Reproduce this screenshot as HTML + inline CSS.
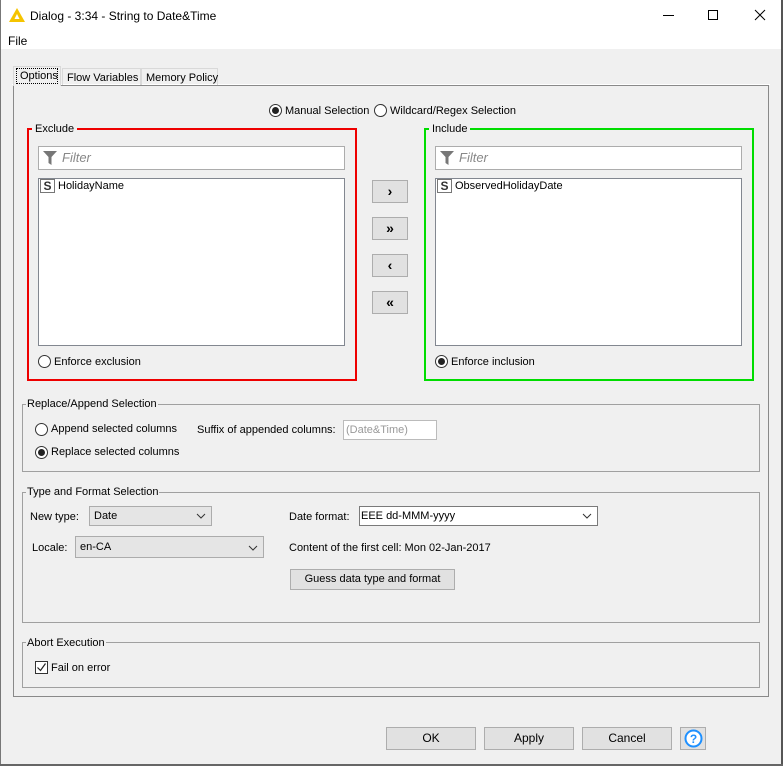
<!DOCTYPE html>
<html><head><meta charset="utf-8"><style>
*{box-sizing:border-box;margin:0;padding:0}
body{width:783px;height:766px;overflow:hidden;background:#f0f0f0;font-family:"Liberation Sans",sans-serif;font-size:11px;color:#000;position:relative}
.a{position:absolute}
.t{position:absolute;white-space:nowrap;line-height:14px}
.radio{position:absolute;width:13px;height:13px;border:1px solid #333;border-radius:50%;background:#fff}
.radio.on::after{content:"";position:absolute;left:2px;top:2px;width:7px;height:7px;border-radius:50%;background:#222}
.grp{position:absolute;border:1px solid #a0a0a0}
.leg{position:absolute;background:#f0f0f0;padding:0 2px;line-height:14px;white-space:nowrap}
.btn{position:absolute;background:#e1e1e1;border:1px solid #adadad;text-align:center}
.combo{position:absolute;border:1px solid #acacac;background:#e5e5e5;padding-left:4px;line-height:18px}
.combo svg{position:absolute;right:5px;top:6px}
</style></head><body>
<div class="a" style="left:0;top:0;width:783px;height:49px;background:#fff"></div>
<div class="a" style="right:0;top:0;width:2px;height:766px;background:#555"></div>
<div class="a" style="left:0;top:0;width:1px;height:766px;background:#777"></div>
<div class="a" style="left:0;bottom:0;width:783px;height:2px;background:#666"></div>
<svg class="a" style="left:9px;top:8px" width="16" height="14"><polygon points="8,0 16,14 0,14" fill="#f5c400"/><polygon points="8,6 10.5,11 5.5,11" fill="#fff"/></svg>
<div class="t" style="left:30px;top:9px;font-size:12px">Dialog - 3:34 - String to Date&amp;Time</div>
<div class="a" style="left:663px;top:15px;width:11px;height:1px;background:#000"></div>
<div class="a" style="left:708px;top:10px;width:10px;height:10px;border:1px solid #000"></div>
<svg class="a" style="left:754px;top:9px" width="12" height="12"><path d="M1 1L11 11M11 1L1 11" stroke="#000" stroke-width="1"/></svg>
<div class="t" style="left:8px;top:34px;font-size:12px">File</div>
<div class="a" style="left:13px;top:85px;width:756px;height:612px;border:1px solid #898989"></div>
<div class="a" style="left:12px;top:84px;width:758px;height:1px;background:#fff"></div>
<div class="a" style="left:13px;top:66px;width:48px;height:20px;background:#f0f0f0;border:1px solid #d9d9d9;border-bottom:none"></div>
<div class="a" style="left:16px;top:68px;width:42px;height:16px;border:1px dotted #000"></div>
<div class="t" style="left:20px;top:69px">Options</div>
<div class="a" style="left:62px;top:68px;width:79px;height:17px;border:1px solid #d9d9d9;border-bottom:none"></div>
<div class="t" style="left:67px;top:71px">Flow Variables</div>
<div class="a" style="left:141px;top:68px;width:77px;height:17px;border:1px solid #d9d9d9;border-bottom:none"></div>
<div class="t" style="left:146px;top:71px">Memory Policy</div>
<div class="radio on" style="left:269px;top:104px"></div>
<div class="t" style="left:285px;top:104px">Manual Selection</div>
<div class="radio" style="left:374px;top:104px"></div>
<div class="t" style="left:390px;top:104px">Wildcard/Regex Selection</div>
<div class="a" style="left:27px;top:128px;width:330px;height:253px;border:2px solid #ee0000"></div>
<div class="leg" style="left:32px;top:122px;padding:0 3px">Exclude</div>
<div class="a" style="left:38px;top:146px;width:307px;height:24px;border:1px solid #acacac;background:#fff"></div>
<svg class="a" style="left:43px;top:150px" width="14" height="16"><path d="M0 1H14L8.5 7V15L5.5 13V7Z" fill="#777"/></svg>
<div class="t" style="left:62px;top:151px;color:#888;font-style:italic;font-size:13px">Filter</div>
<div class="a" style="left:38px;top:178px;width:307px;height:168px;border:1px solid #828790;background:#fff"></div>
<div class="a" style="left:40px;top:179px;width:15px;height:14px;border:1px solid #777;font-weight:bold;text-align:center;line-height:12px;color:#333;font-size:12px">S</div>
<div class="t" style="left:58px;top:179px">HolidayName</div>
<div class="radio" style="left:38px;top:355px"></div>
<div class="t" style="left:54px;top:355px">Enforce exclusion</div>
<div class="btn" style="left:372px;top:180px;width:36px;height:23px;line-height:20px;font-weight:bold;font-size:14px">›</div>
<div class="btn" style="left:372px;top:217px;width:36px;height:23px;line-height:20px;font-weight:bold;font-size:14px">»</div>
<div class="btn" style="left:372px;top:254px;width:36px;height:23px;line-height:20px;font-weight:bold;font-size:14px">‹</div>
<div class="btn" style="left:372px;top:291px;width:36px;height:23px;line-height:20px;font-weight:bold;font-size:14px">«</div>
<div class="a" style="left:424px;top:128px;width:330px;height:253px;border:2px solid #00dd00"></div>
<div class="leg" style="left:429px;top:122px;padding:0 3px">Include</div>
<div class="a" style="left:435px;top:146px;width:307px;height:24px;border:1px solid #acacac;background:#fff"></div>
<svg class="a" style="left:440px;top:150px" width="14" height="16"><path d="M0 1H14L8.5 7V15L5.5 13V7Z" fill="#777"/></svg>
<div class="t" style="left:459px;top:151px;color:#888;font-style:italic;font-size:13px">Filter</div>
<div class="a" style="left:435px;top:178px;width:307px;height:168px;border:1px solid #828790;background:#fff"></div>
<div class="a" style="left:437px;top:179px;width:15px;height:14px;border:1px solid #777;font-weight:bold;text-align:center;line-height:12px;color:#333;font-size:12px">S</div>
<div class="t" style="left:455px;top:179px">ObservedHolidayDate</div>
<div class="radio on" style="left:435px;top:355px"></div>
<div class="t" style="left:451px;top:355px">Enforce inclusion</div>
<div class="grp" style="left:22px;top:404px;width:738px;height:68px"></div>
<div class="leg" style="left:26px;top:397px;padding:0 1px">Replace/Append Selection</div>
<div class="radio" style="left:35px;top:423px"></div>
<div class="t" style="left:51px;top:422px">Append selected columns</div>
<div class="radio on" style="left:35px;top:446px"></div>
<div class="t" style="left:51px;top:445px">Replace selected columns</div>
<div class="t" style="left:197px;top:423px">Suffix of appended columns:</div>
<div class="a" style="left:343px;top:420px;width:94px;height:20px;border:1px solid #bbb;background:#fff;color:#999;padding-left:2px;line-height:18px">(Date&amp;Time)</div>
<div class="grp" style="left:22px;top:492px;width:738px;height:131px"></div>
<div class="leg" style="left:26px;top:485px;padding:0 1px">Type and Format Selection</div>
<div class="t" style="left:30px;top:510px">New type:</div>
<div class="combo" style="left:89px;top:506px;width:123px;height:20px">Date<svg width="10" height="6"><path d="M1 1L5 5L9 1" stroke="#333" fill="none"/></svg></div>
<div class="t" style="left:32px;top:541px">Locale:</div>
<div class="combo" style="left:75px;top:536px;width:189px;height:22px;line-height:20px">en-CA<svg width="10" height="6" style="top:8px"><path d="M1 1L5 5L9 1" stroke="#333" fill="none"/></svg></div>
<div class="t" style="left:289px;top:510px">Date format:</div>
<div class="combo" style="left:359px;top:506px;width:239px;height:20px;background:#fff;border-color:#7a7a7a;padding-left:1px">EEE dd-MMM-yyyy<svg width="10" height="6"><path d="M1 1L5 5L9 1" stroke="#333" fill="none"/></svg></div>
<div class="t" style="left:289px;top:541px">Content of the first cell: Mon 02-Jan-2017</div>
<div class="btn" style="left:290px;top:569px;width:165px;height:21px;line-height:19px">Guess data type and format</div>
<div class="grp" style="left:22px;top:642px;width:738px;height:46px"></div>
<div class="leg" style="left:26px;top:636px;padding:0 1px">Abort Execution</div>
<div class="a" style="left:35px;top:661px;width:13px;height:13px;border:1px solid #333;background:#fff"></div>
<svg class="a" style="left:36px;top:662px" width="11" height="11"><path d="M1.5 5.5L4.5 8.5L9.5 1.5" stroke="#222" fill="none" stroke-width="1.2"/></svg>
<div class="t" style="left:51px;top:661px">Fail on error</div>
<div class="btn" style="left:386px;top:727px;width:90px;height:23px;line-height:21px;font-size:12px">OK</div>
<div class="btn" style="left:484px;top:727px;width:90px;height:23px;line-height:21px;font-size:12px">Apply</div>
<div class="btn" style="left:582px;top:727px;width:90px;height:23px;line-height:21px;font-size:12px">Cancel</div>
<div class="btn" style="left:680px;top:727px;width:26px;height:23px"></div>
<svg class="a" style="left:684px;top:729px" width="19" height="19"><circle cx="9.5" cy="9.5" r="8" fill="#fff" stroke="#1e90ff" stroke-width="2"/><text x="9.5" y="14" font-family="Liberation Sans" font-size="12" font-weight="bold" fill="#1e90ff" text-anchor="middle">?</text></svg>
</body></html>
